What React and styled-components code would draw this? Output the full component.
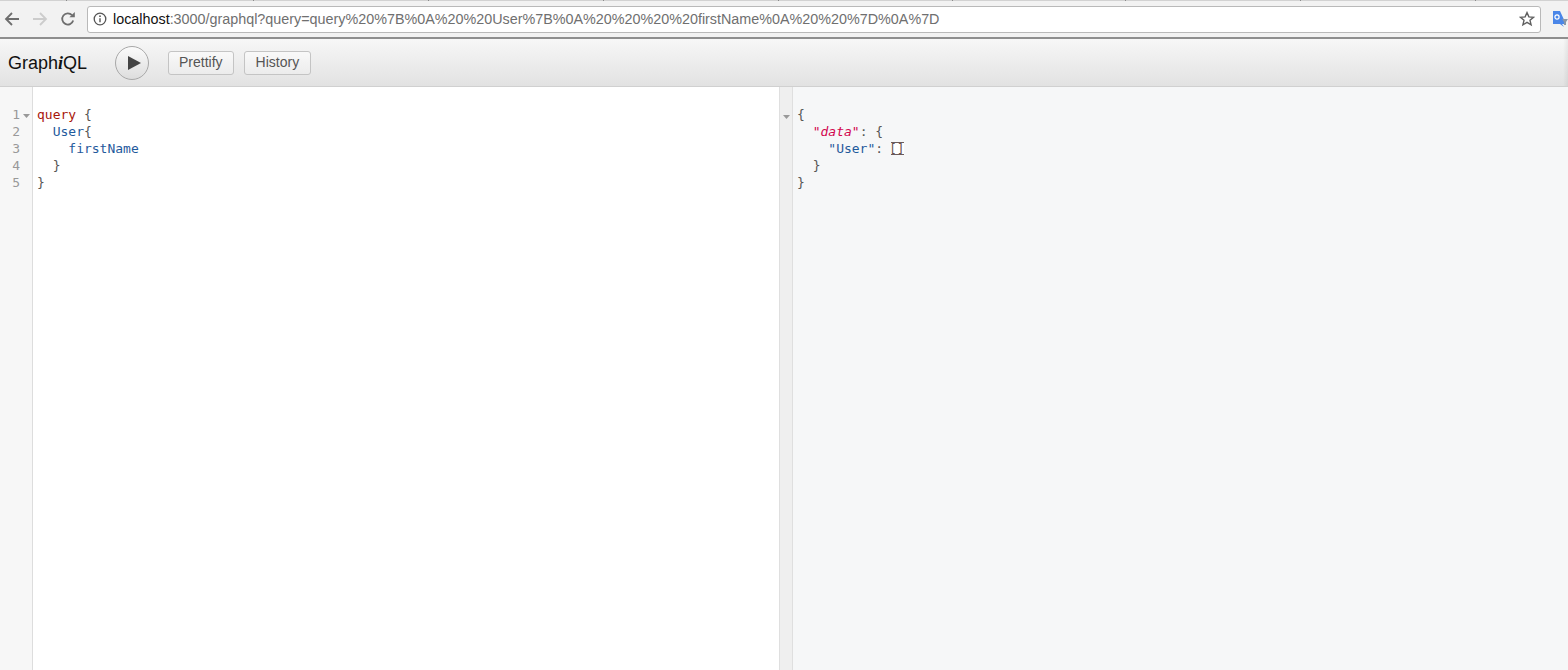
import React from 'react'
import styled, { createGlobalStyle } from 'styled-components'

const GlobalStyle = createGlobalStyle`
    html, body {
        margin: 0;
        height: 100%;
        overflow: hidden;
        background: #ffffff;
    }
    #root {
        height: 100%;
    }
`

const tabWidths = [67, 187, 175, 175, 175, 174, 173, 175, 175]

const queryLines = [
    [['keyword', 'query'], ['plain', ' '], ['punct', '{']],
    [['plain', '  '], ['field', 'User'], ['punct', '{']],
    [['plain', '    '], ['field', 'firstName']],
    [['plain', '  '], ['punct', '}']],
    [['punct', '}']],
]

const resultLines = [
    [['punct', '{']],
    [['plain', '  '], ['key', '"'], ['keyItalic', 'data'], ['key', '"'], ['punct', ': {']],
    [['plain', '    '], ['field', '"User"'], ['punct', ': '], ['bracket', '[]']],
    [['plain', '  '], ['punct', '}']],
    [['punct', '}']],
]

const Fold = () => (
    <svg width="7" height="4" viewBox="0 0 7 4">
        <path d="M0 0h7L3.5 4z" fill="#999999" />
    </svg>
)

const CodeLines = ({ lines }) =>
    lines.map((line, i) => (
        <CodeLine key={i}>
            {line.map(([kind, text], j) =>
                kind === 'bracket' ? (
                    <Bracket key={j}>{text}</Bracket>
                ) : (
                    <Token key={j} $kind={kind}>
                        {text}
                    </Token>
                )
            )}
        </CodeLine>
    ))

const App = () => {
    return (
        <Page>
            <GlobalStyle />
            <TabStrip>
                {tabWidths.map((w, i) => (
                    <Tab key={i} style={{ width: w }} />
                ))}
            </TabStrip>
            <BrowserBar>
                <NavIcon>
                    <svg width="16" height="16" viewBox="0 0 16 16" fill="none" stroke="#6e6e6e" strokeWidth="1.8">
                        <path d="M15 8H2M8 2L2 8l6 6" />
                    </svg>
                </NavIcon>
                <NavIcon>
                    <svg width="16" height="16" viewBox="0 0 16 16" fill="none" stroke="#cccccc" strokeWidth="1.8">
                        <path d="M1 8h13M8 2l6 6-6 6" />
                    </svg>
                </NavIcon>
                <NavIcon>
                    <svg width="16" height="16" viewBox="0 0 16 16" fill="none">
                        <path d="M13.2 9.5A5.6 5.6 0 1 1 12 4.2" stroke="#6e6e6e" strokeWidth="1.8" />
                        <path d="M9.4 6.3h5.4V.9z" fill="#6e6e6e" />
                    </svg>
                </NavIcon>
                <AddressBar>
                    <svg width="14" height="14" viewBox="0 0 14 14" fill="none">
                        <circle cx="7" cy="7" r="5.8" stroke="#555555" strokeWidth="1.3" />
                        <path d="M7 6.2v4" stroke="#555555" strokeWidth="1.4" />
                        <circle cx="7" cy="4.2" r="0.9" fill="#555555" />
                    </svg>
                    <Url>
                        <Host>localhost</Host>
                        :3000/graphql?query=query%20%7B%0A%20%20User%7B%0A%20%20%20%20firstName%0A%20%20%7D%0A%7D
                    </Url>
                    <svg width="16" height="16" viewBox="0 0 16 16" fill="none">
                        <path
                            d="M8 1.6l1.9 4.3 4.6.4-3.5 3 1.1 4.6L8 11.4l-4.1 2.5L5 9.3l-3.5-3 4.6-.4z"
                            stroke="#5f5f5f"
                            strokeWidth="1.4"
                        />
                    </svg>
                </AddressBar>
                <Extension>
                    <svg width="15" height="17" viewBox="0 0 15 17">
                        <path d="M0 0h7l6 13H9l2 3-4-3H0z" fill="#4a86e8" />
                        <circle cx="4" cy="6" r="2.1" fill="none" stroke="#ffffff" strokeWidth="1.2" />
                        <path d="M9 8h6l-2 3v3h-2v-3z" fill="#8a97a8" />
                    </svg>
                </Extension>
            </BrowserBar>
            <Toolbar>
                <Title>
                    Graph<em>i</em>QL
                </Title>
                <PlayButton>
                    <svg width="14" height="14" viewBox="0 0 14 14">
                        <path d="M1 0l13 7-13 7z" fill="#444444" />
                    </svg>
                </PlayButton>
                <ToolButton $pad={10}>Prettify</ToolButton>
                <ToolButton $pad={11}>History</ToolButton>
            </Toolbar>
            <Panes>
                <QueryPane>
                    <Gutter>
                        {queryLines.map((_, i) => (
                            <LineNumber key={i}>
                                {i + 1}
                                {i === 0 && (
                                    <FoldMark>
                                        <Fold />
                                    </FoldMark>
                                )}
                            </LineNumber>
                        ))}
                    </Gutter>
                    <Code>
                        <CodeLines lines={queryLines} />
                    </Code>
                </QueryPane>
                <ResultPane>
                    <ResultGutter>
                        <Fold />
                    </ResultGutter>
                    <ResultCode>
                        <CodeLines lines={resultLines} />
                    </ResultCode>
                </ResultPane>
            </Panes>
        </Page>
    )
}

const tokenColors = {
    plain: '#333333',
    keyword: '#a8160a',
    field: '#1f5a9c',
    punct: '#555555',
    key: '#d2054e',
    keyItalic: '#d2054e',
}

const Page = styled.div`
    display: flex;
    flex-direction: column;
    height: 670px;
    width: 1568px;
    overflow: hidden;
`

const TabStrip = styled.div`
    height: 1px;
    display: flex;
    background: #d2d2d2;
`

const Tab = styled.div`
    box-sizing: border-box;
    border-right: 1px solid #8a8a8a;
`

const BrowserBar = styled.div`
    height: 38px;
    box-sizing: border-box;
    padding: 5px 0 5px 4px;
    display: flex;
    align-items: center;
    background: #f2f2f2;
    border-bottom: 2px solid #8e8e8e;
`

const NavIcon = styled.div`
    width: 28px;
    display: flex;
    align-items: center;
    justify-content: flex-start;
`

const AddressBar = styled.div`
    width: 1454px;
    height: 27px;
    margin-left: -1px;
    padding: 0 5px 0 5px;
    box-sizing: border-box;
    display: flex;
    align-items: center;
    background: #ffffff;
    border: 1px solid #b9b9b9;
    border-radius: 3px;
`

const Url = styled.div`
    flex: 1;
    margin-left: 6px;
    font: 14.35px 'Liberation Sans', Arial, sans-serif;
    color: #6f6f6f;
    white-space: nowrap;
`

const Host = styled.span`
    color: #111111;
`

const Extension = styled.div`
    margin-left: 12px;
    display: flex;
`

const Toolbar = styled.div`
    position: relative;
    height: 48px;
    box-sizing: border-box;
    padding: 0 0 0 8px;
    display: flex;
    align-items: center;
    background: linear-gradient(#f7f7f7, #e2e2e2);
    border-bottom: 1px solid #d0d0d0;

    &::after {
        content: '';
        position: absolute;
        top: 0;
        right: 0;
        bottom: 0;
        width: 5px;
        background: linear-gradient(to right, rgba(0, 0, 0, 0), rgba(0, 0, 0, 0.06));
    }
`

const Title = styled.div`
    width: 107px;
    padding-top: 1px;
    font: 18px 'Liberation Sans', Arial, sans-serif;
    color: #111111;

    em {
        font-weight: 700;
        font-family: 'Liberation Serif', serif;
    }
`

const PlayButton = styled.div`
    width: 34px;
    height: 34px;
    margin-right: 19px;
    box-sizing: border-box;
    padding-left: 3px;
    display: flex;
    align-items: center;
    justify-content: center;
    border: 1px solid #a8a8a8;
    border-radius: 50%;
    background: linear-gradient(#fbfbfb, #dddddd);
`

const ToolButton = styled.div`
    height: 24px;
    margin-right: 10px;
    padding: 0 ${(p) => p.$pad}px 2px;
    box-sizing: border-box;
    display: flex;
    align-items: center;
    font: 14px 'Liberation Sans', Arial, sans-serif;
    color: #555555;
    background: linear-gradient(#f9f9f9, #ececec);
    border: 1px solid #c4c4c4;
    border-radius: 3px;
`

const Panes = styled.div`
    flex: 1;
    display: flex;
    min-height: 0;
`

const QueryPane = styled.div`
    width: 779px;
    display: flex;
    background: #ffffff;
`

const Gutter = styled.div`
    width: 33px;
    box-sizing: border-box;
    padding-top: 19px;
    background: #f7f7f7;
    border-right: 1px solid #dddddd;
`

const LineNumber = styled.div`
    position: relative;
    width: 20px;
    text-align: right;
    font: 13px/17px 'DejaVu Sans Mono', monospace;
    color: #999999;
`

const FoldMark = styled.span`
    position: absolute;
    left: 23px;
    top: 8px;
    display: flex;
`

const Code = styled.div`
    flex: 1;
    padding: 19px 0 0 4px;
`

const ResultPane = styled.div`
    flex: 1;
    display: flex;
    background: #f6f7f8;
`

const ResultGutter = styled.div`
    width: 14px;
    box-sizing: border-box;
    padding: 28px 0 0 3px;
    display: flex;
    align-items: flex-start;
    background: #efefef;
    border-left: 1px solid #dfdfdf;
    border-right: 1px solid #dfdfdf;
`

const ResultCode = styled(Code)`
    padding-left: 4px;
`

const CodeLine = styled.div`
    height: 17px;
    font: 13px/17px 'DejaVu Sans Mono', monospace;
    white-space: pre;
`

const Token = styled.span`
    color: ${(p) => tokenColors[p.$kind]};
    font-style: ${(p) => (p.$kind === 'keyItalic' ? 'italic' : 'normal')};
`

const Bracket = styled.span`
    position: relative;
    isolation: isolate;
    display: inline-block;
    margin-left: -2px;
    color: #6a5550;

    &::before {
        content: '';
        position: absolute;
        z-index: -1;
        left: 2px;
        right: 1px;
        top: 2px;
        height: 11px;
        background: #ffffff;
        border-top: 1px solid #6a5a5a;
        border-bottom: 1px solid #6a5a5a;
    }
`

export default App
